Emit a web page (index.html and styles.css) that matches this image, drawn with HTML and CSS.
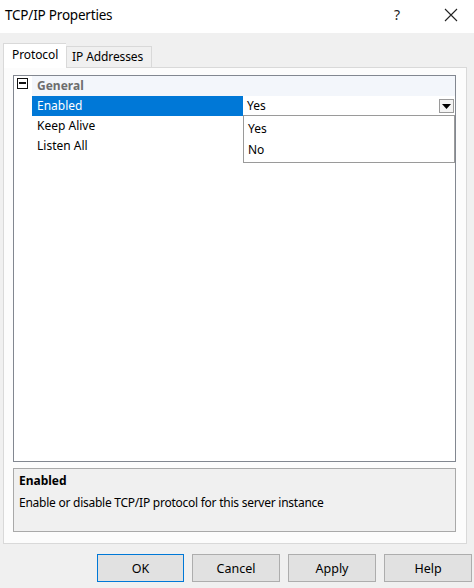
FILE: index.html
```html
<!DOCTYPE html>
<html>
<head>
<meta charset="utf-8">
<link rel="stylesheet" href="styles.css">
</head>
<body>
<div class="dialog">
  <div class="titlebar">
    <span class="title">TCP/IP Properties</span>
    <span class="help">?</span>
    <svg class="close" width="14" height="14" viewBox="0 0 14 14"><path d="M1 1 L13 13 M13 1 L1 13" stroke="#222" stroke-width="1.1" fill="none"/></svg>
  </div>
  <div class="tabs">
    <div class="tab active">Protocol</div>
    <div class="tab">IP Addresses</div>
  </div>
  <div class="panel">
    <div class="grid">
      <div class="row cat">
        <div class="margin"><span class="expander"></span></div>
        <div class="catname">General</div>
      </div>
      <div class="row selected">
        <div class="margin"></div>
        <div class="name">Enabled</div>
        <div class="value editor">
          <span>Yes</span>
          <span class="ddbtn"><svg width="9" height="5" viewBox="0 0 9 5"><path d="M0 0 H9 L4.5 5 Z" fill="#000"/></svg></span>
        </div>
        <div class="droplist">
          <div class="item">Yes</div>
          <div class="item">No</div>
        </div>
      </div>
      <div class="row">
        <div class="margin"></div>
        <div class="name">Keep Alive</div>
        <div class="value"></div>
      </div>
      <div class="row">
        <div class="margin"></div>
        <div class="name">Listen All</div>
        <div class="value"></div>
      </div>
    </div>
    <div class="desc">
      <div class="desc-title">Enabled</div>
      <div class="desc-text">Enable or disable TCP/IP protocol for this server instance</div>
    </div>
  </div>
  <div class="buttons">
    <button class="btn default">OK</button>
    <button class="btn">Cancel</button>
    <button class="btn">Apply</button>
    <button class="btn">Help</button>
  </div>
</div>
</body>
</html>
```
FILE: styles.css
```css
html, body {
  margin: 0;
  padding: 0;
}
body {
  width: 474px;
  height: 588px;
  background: #f0f0f0;
  font-family: "Noto Sans", "Open Sans", sans-serif;
  font-size: 12px;
  color: #000;
  overflow: hidden;
}
.dialog {
  display: flex;
  flex-direction: column;
  height: 588px;
}
.titlebar {
  height: 33px;
  background: #fff;
  display: flex;
  align-items: center;
  padding-left: 5px;
  box-sizing: border-box;
}
.title {
  font-size: 13.5px;
  letter-spacing: -0.2px;
  color: #000;
  flex: 1;
  margin-top: -3px;
}
.help {
  font-size: 14px;
  margin-right: 44px;
  margin-top: -4px;
  color: #222;
}
.close {
  margin-right: 16px;
  margin-top: -3px;
}
.tabs {
  display: flex;
  align-items: flex-end;
  margin-top: 10px;
  padding-left: 3px;
  height: 24px;
  position: relative;
  z-index: 1;
}
.tab {
  height: 21px;
  box-sizing: border-box;
  border: 1px solid #d9d9d9;
  border-bottom: none;
  background: #f0f0f0;
  padding: 0 0 0 5px;
  width: 86px;
  line-height: 20px;
  font-size: 12px;
  white-space: nowrap;
  letter-spacing: -0.1px;
}
.tab.active {
  height: 25px;
  width: 63px;
  background: #fff;
  border-right: none;
  padding-left: 8px;
  line-height: 21px;
  margin-bottom: -1px;
}
.panel {
  margin: 0 7px 0 3px;
  background: #fcfcfc;
  border: 1px solid #d9d9d9;
  padding: 7px 10px 11px 9px;
  display: flex;
  flex-direction: column;
  gap: 6px;
  height: 477px;
  box-sizing: border-box;
}
.grid {
  border: 1px solid #828790;
  background: #fff;
  height: 388px;
  box-sizing: border-box;
  display: flex;
  flex-direction: column;
}
.row {
  display: flex;
  height: 20px;
  position: relative;
  flex: none;
}
.margin {
  width: 18px;
  flex: none;
  display: flex;
  align-items: center;
  justify-content: flex-start;
  padding-left: 3px;
  box-sizing: border-box;
}
.expander {
  width: 11px;
  height: 11px;
  border: 1.5px solid #111;
  box-sizing: border-box;
  position: relative;
  margin-top: -5px;
  background: #fff;
}
.expander::after {
  content: "";
  position: absolute;
  left: 1px;
  right: 1px;
  top: 3px;
  height: 1.5px;
  background: #111;
}
.catname {
  flex: 1;
  background: #f3f6fb;
  font-weight: bold;
  color: #6d6d6d;
  padding-left: 5px;
  line-height: 20px;
}
.name {
  width: 211px;
  flex: none;
  padding-left: 5px;
  box-sizing: border-box;
  line-height: 20px;
  color: #000;
}
.value {
  flex: 1;
  padding-left: 4px;
  line-height: 19px;
  display: flex;
  align-items: center;
}
.selected .name {
  background: #0078d7;
  color: #fff;
}
.editor {
  border-bottom: 1px solid #9a9a9a;
  height: 20px;
  box-sizing: border-box;
  justify-content: space-between;
  padding-right: 1px;
}
.ddbtn {
  width: 15px;
  height: 14px;
  box-sizing: border-box;
  border: 1px solid #9a9a9a;
  background: #f4f4f4;
  display: flex;
  align-items: center;
  justify-content: center;
  margin-top: 1px;
}
.droplist {
  position: absolute;
  left: 229px;
  right: 0;
  top: 20px;
  height: 47px;
  box-sizing: border-box;
  border: 1px solid #9a9a9a;
  border-top: none;
  background: #fff;
  z-index: 2;
  padding-top: 3px;
}
.item {
  height: 20.5px;
  line-height: 20px;
  padding-left: 4px;
}
.desc {
  height: 64px;
  box-sizing: border-box;
  border: 1px solid #a9a9a9;
  background: #f0f0f0;
  padding: 3px 5px;
}
.desc-title {
  font-weight: bold;
  line-height: 18px;
}
.desc-text {
  margin-top: 4px;
  line-height: 18px;
  letter-spacing: -0.25px;
}
.buttons {
  display: flex;
  justify-content: flex-end;
  gap: 8px;
  padding: 10px 2px 0 0;
}
.btn {
  width: 88px;
  height: 28px;
  box-sizing: border-box;
  border: 1px solid #adadad;
  background: #e1e1e1;
  font-family: "Noto Sans", "Open Sans", sans-serif;
  font-size: 12.5px;
  color: #000;
  padding: 0;
  margin: 0;
}
.btn.default {
  border: 1px solid #0078d7;
  width: 87px;
}
```
